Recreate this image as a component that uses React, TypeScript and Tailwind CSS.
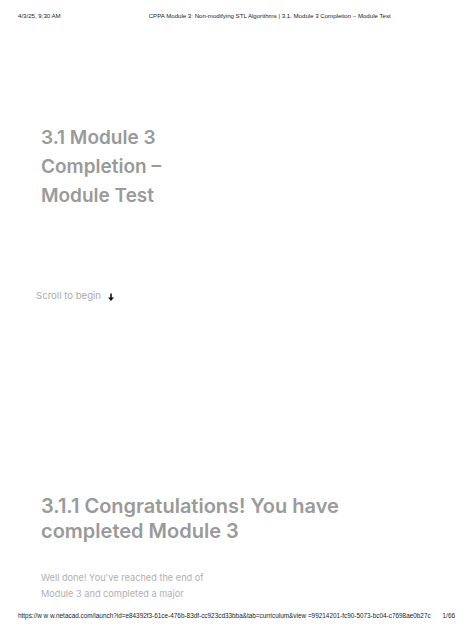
import React from "react";

export default function App() {
  return (
    <div className="w-[474px] h-[632px] bg-white flex flex-col" style={{ fontFamily: "Inter, 'Liberation Sans', sans-serif" }}>
      <div className="flex items-center h-[32px] shrink-0 pl-[18px] pr-[20px] text-[6.1px] text-[#222]" style={{ fontFamily: "'Liberation Sans', Arial, sans-serif" }}>
        <span>4/3/25, 9:30 AM</span>
        <span className="ml-[88px]">CPPA Module 3: Non-modifying STL Algorithms | 3.1. Module 3 Completion – Module Test</span>
      </div>
      <div className="pl-[41px] pt-[91px]">
        <h1 className="text-[19px] leading-[29px] font-semibold text-[#9a9a9a] w-[180px]">
          3.1 Module 3 Completion – Module Test
        </h1>
      </div>
      <div className="pl-[36px] pt-[79px] flex items-center gap-[6px] text-[9.6px] text-[#ababab]">
        <span>Scroll to begin</span>
        <svg width="8" height="9" viewBox="0 0 8 9" className="mt-[3px]">
          <path d="M4 0.5 V7" stroke="#111" strokeWidth="1.6" />
          <path d="M1 4.5 L4 8 L7 4.5 Z" fill="#111" />
        </svg>
      </div>
      <div className="pl-[41px] pt-[191px]">
        <h2 className="text-[20px] leading-[25px] font-semibold text-[#9a9a9a]">
          3.1.1 Congratulations! You have<br />completed Module 3
        </h2>
        <div className="mt-[26px] text-[9.2px] leading-[16px] text-[#b0b0b0]">
          <div>Well done! You've reached the end of</div>
          <div>Module 3 and completed a major</div>
        </div>
      </div>
      <div className="mt-auto h-[21px] shrink-0 flex items-start pl-[18px] pr-[19px] text-[6.4px] text-[#222]" style={{ fontFamily: "'Liberation Sans', Arial, sans-serif" }}>
        <span>https://w w w.netacad.com/launch?id=e84392f3-61ce-476b-83df-cc923cd33bba&amp;tab=curriculum&amp;view =99214201-fc90-5073-bc04-c7698ae0b27c</span>
        <span className="ml-auto">1/66</span>
      </div>
    </div>
  );
}
